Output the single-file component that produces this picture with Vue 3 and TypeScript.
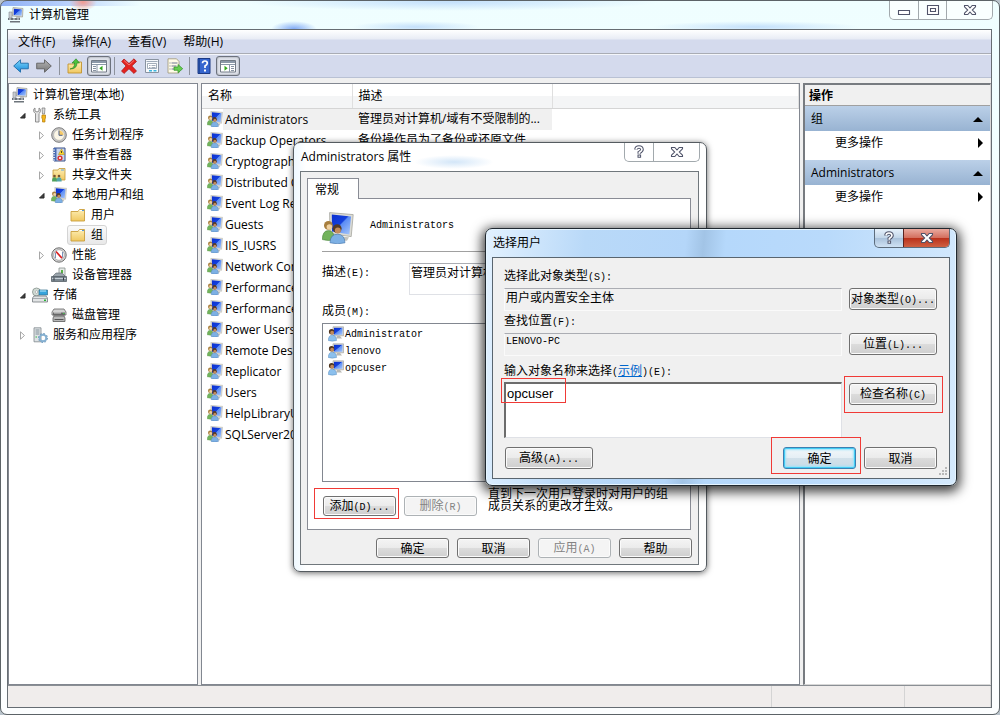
<script setup lang="ts">
import { h, ref } from 'vue'

interface TreeItem {
  label: string
  icon: string
  level: number
  state: 'open' | 'closed' | 'leaf' | 'root'
  selected?: boolean
}

const menus = ['文件(F)', '操作(A)', '查看(V)', '帮助(H)']

const tree: TreeItem[] = [
  { label: '计算机管理(本地)', icon: 'computer', level: 0, state: 'root' },
  { label: '系统工具', icon: 'tools', level: 1, state: 'open' },
  { label: '任务计划程序', icon: 'clock', level: 2, state: 'closed' },
  { label: '事件查看器', icon: 'events', level: 2, state: 'closed' },
  { label: '共享文件夹', icon: 'share', level: 2, state: 'closed' },
  { label: '本地用户和组', icon: 'group', level: 2, state: 'open' },
  { label: '用户', icon: 'folder', level: 3, state: 'leaf' },
  { label: '组', icon: 'folder', level: 3, state: 'leaf', selected: true },
  { label: '性能', icon: 'perf', level: 2, state: 'closed' },
  { label: '设备管理器', icon: 'device', level: 2, state: 'leaf' },
  { label: '存储', icon: 'storage', level: 1, state: 'open' },
  { label: '磁盘管理', icon: 'disk', level: 2, state: 'leaf' },
  { label: '服务和应用程序', icon: 'services', level: 1, state: 'closed' },
]

const groups = [
  { name: 'Administrators', desc: '管理员对计算机/域有不受限制的...' },
  { name: 'Backup Operators', desc: '备份操作员为了备份或还原文件...' },
  { name: 'Cryptographic Operators', desc: '' },
  { name: 'Distributed COM Users', desc: '' },
  { name: 'Event Log Readers', desc: '' },
  { name: 'Guests', desc: '' },
  { name: 'IIS_IUSRS', desc: '' },
  { name: 'Network Configuration', desc: '' },
  { name: 'Performance Log Users', desc: '' },
  { name: 'Performance Monitor', desc: '' },
  { name: 'Power Users', desc: '' },
  { name: 'Remote Desktop Users', desc: '' },
  { name: 'Replicator', desc: '' },
  { name: 'Users', desc: '' },
  { name: 'HelpLibraryUpdaters', desc: '' },
  { name: 'SQLServer2005', desc: '' },
]

const actionSections = ['组', 'Administrators']
const members = ['Administrator', 'lenovo', 'opcuser']

const objectType = ref('用户或内置安全主体')
const place = ref('LENOVO-PC')
const objectNames = ref('opcuser')

// Half-width runs are set in a fixed-width face beside the full-width text.
const Song = (props: { text: string }) =>
  h(
    'span',
    { class: 'song' },
    (props.text.match(/[\x20-\x7e]+|[^\x20-\x7e]+/g) ?? []).map((run) =>
      h('span', { class: /^[\x20-\x7e]/.test(run) ? 'half' : 'full' }, run),
    ),
  )
Song.props = ['text']
</script>

<template>
  <svg class="defs" aria-hidden="true">
    <defs>
      <linearGradient id="gScreen" x1="0" y1="0" x2="1" y2="1">
        <stop offset="0" stop-color="#0a2fd0" /><stop offset=".45" stop-color="#1440dc" />
        <stop offset=".5" stop-color="#5b8cf4" /><stop offset="1" stop-color="#a8c8fb" />
      </linearGradient>
      <linearGradient id="gFolder" x1="0" y1="0" x2="0" y2="1">
        <stop offset="0" stop-color="#fdeeb5" /><stop offset="1" stop-color="#f0c860" />
      </linearGradient>
      <linearGradient id="gBlue" x1="0" y1="0" x2="0" y2="1">
        <stop offset="0" stop-color="#7fd6fa" /><stop offset="1" stop-color="#1389dc" />
      </linearGradient>
      <linearGradient id="gGrey" x1="0" y1="0" x2="0" y2="1">
        <stop offset="0" stop-color="#b4b4b4" /><stop offset="1" stop-color="#777" />
      </linearGradient>
    </defs>
    <symbol id="computer" viewBox="0 0 16 16">
      <path d="M5 .5 15 1.5 14.5 10 4.5 9z" fill="#dcdcd4" stroke="#9b9b94" stroke-width=".7" />
      <path d="M6 1.7 14 2.5 13.6 8.8 5.7 8z" fill="url(#gScreen)" />
      <path d="M1 5h3v6H1z" fill="#c9ccd0" stroke="#858a90" stroke-width=".6" />
      <path d="M0 11h12v2H0zM2 14h10v1.6H2z" fill="#6d747b" />
      <path d="M1 12h2M5 12h2M9 12h2" stroke="#d8dde2" />
      <path d="M8 9.5h4v1.2H8z" fill="#aaa" />
    </symbol>
    <symbol id="tools" viewBox="0 0 16 16">
      <path d="M3 1 3 4 5 5 7 4 7 1C9 2 9 5 7 6.5V15H3.500V6.500C1 5 1 2 3 1z" fill="#e4e4e4" stroke="#777" stroke-width=".8" />
      <path d="M10 1h3l-.5 6h-2z" fill="#ddd" stroke="#777" stroke-width=".7" />
      <path d="M10 8h3.500v3L13 12v3h-2.500v-3l-.7-1z" fill="#f4b61c" stroke="#b47b08" stroke-width=".7" />
    </symbol>
    <symbol id="clock" viewBox="0 0 16 16">
      <circle cx="8" cy="8" r="7.300" fill="#c9c9c9" stroke="#7c7c7c" />
      <circle cx="8" cy="8" r="5.400" fill="#fbf6e6" stroke="#9e9e9e" stroke-width=".5" />
      <path d="M8 8h4.500A4.500 4.500 0 0 0 8 3.500z" fill="#f5c968" />
      <path d="M8 3.500V8.300H11.500" fill="none" stroke="#4b5f88" />
    </symbol>
    <symbol id="events" viewBox="0 0 16 16">
      <path d="M3 1h11v13H3z" fill="#c7d5ee" stroke="#3b5187" />
      <path d="M2.500 1h3v13h-3z" fill="#496bb3" />
      <path d="M1 3h3M1 5.500h3M1 8h3M1 10.500h3M1 13h3" stroke="#e4e8ef" stroke-width="1" />
      <path d="M10.500 2 13.500 7.500h-6z" fill="#ffd828" stroke="#aa860b" stroke-width=".5" />
      <path d="M10.500 4v2" stroke="#222" stroke-width=".8" />
      <circle cx="9" cy="11" r="2.600" fill="#d93434" />
      <path d="m8 10 2 2m0-2-2 2" stroke="#fff" stroke-width=".8" />
    </symbol>
    <symbol id="share" viewBox="0 0 16 16">
      <path d="M2 3h5l1-1.500h6V13H2z" fill="url(#gFolder)" stroke="#c39a35" stroke-width=".8" />
      <path d="M10 3h3" stroke="#5ca1dc" />
      <circle cx="3.500" cy="9" r="1.300" fill="#7a5330" /><circle cx="8" cy="9" r="1.300" fill="#7a5330" />
      <path d="M1 14.500q0-4.300 2.600-4.300t2.600 4.300z" fill="#4ea05a" /><path d="M5.500 14.500q0-4.300 2.600-4.300t2.600 4.300z" fill="#55a6a8" />
    </symbol>
    <symbol id="group" viewBox="0 0 16 16">
      <path d="M3.800.3 15.600 1.300 14.600 12.300 4 10.800z" fill="#dcdcd6" stroke="#a6a69e" stroke-width=".4" />
      <path d="M9 12.300 13.500 12.600 12.500 14.400 9 14.200z" fill="#c4c4be" />
      <path d="M4.900 1.300 14.500 2.200 13.700 11.200 5 9.800z" fill="url(#gScreen)" />
      <circle cx="3.200" cy="6.700" r="2.200" fill="#a87f3e" /><circle cx="3.700" cy="7.500" r="1.400" fill="#f0d2a2" />
      <path d="M.2 13.800q0-4.500 3-4.500 2.800 0 3.200 4.500-3 .9-6.200 0z" fill="#72b35c" stroke="#48833a" stroke-width=".3" />
      <circle cx="7.600" cy="8.300" r="2.200" fill="#553b26" /><circle cx="7.900" cy="9.300" r="1.500" fill="#c48c5c" />
      <path d="M4 15.400q.1-4.300 3.700-4.300t3.800 4.300q-3.800 1-7.500 0z" fill="#7db0e4" stroke="#3f70a8" stroke-width=".3" />
    </symbol>
    <symbol id="user" viewBox="0 0 16 16">
      <path d="M5 .8h10.500v9H5z" fill="#dcdcd4" stroke="#999" stroke-width=".6" />
      <path d="M6 1.800h8.500v7H6z" fill="url(#gScreen)" /><path d="M9 10h3l2 2.500H8z" fill="#b9b9b4" />
      <circle cx="3.600" cy="5.700" r="2.700" fill="#51361f" /><circle cx="4.100" cy="6.700" r="1.900" fill="#c28b5c" />
      <path d="M.3 14.500q0-5.300 4-5.300t4.300 5.300q-4.500 1.300-8.300 0z" fill="#8cc0ed" stroke="#427ab0" stroke-width=".4" />
    </symbol>
    <symbol id="folder" viewBox="0 0 16 16">
      <path d="M1 4.500h7l1.500-2h5v11.500h-13.500z" fill="url(#gFolder)" stroke="#c99e3c" stroke-width=".9" />
      <path d="M9.500 3.500h4" stroke="#fff" /><path d="M12 3.500h2" stroke="#4f9ad8" />
    </symbol>
    <symbol id="perf" viewBox="0 0 16 16">
      <circle cx="8" cy="8" r="7.200" fill="#d6d6d6" stroke="#6f6f6f" />
      <circle cx="8" cy="8" r="5.300" fill="#fff" stroke="#888" stroke-width=".6" />
      <path d="M4.500 11V5.500M11.500 5v5.500" stroke="#5577a8" stroke-width=".8" />
      <path d="m5 4.500 6 6.800" stroke="#d92020" stroke-width="1.700" />
    </symbol>
    <symbol id="device" viewBox="0 0 16 16">
      <path d="M8 1h6v8H8z" fill="#e7ebe8" stroke="#8b9290" stroke-width=".8" /><path d="M10 3h2v3h-2z" fill="#57b344" />
      <path d="M3 8 5 6h6l3 3v2H2V9z" fill="#9aa4ab" stroke="#59636a" stroke-width=".6" />
      <path d="M.5 9.500h15v5H.5z" fill="#7b8790" stroke="#4b545b" stroke-width=".7" />
      <path d="M1 11.500h14" stroke="#c5ced5" /><path d="M3 10.500v3M12.500 10.500v3" stroke="#343b41" />
    </symbol>
    <symbol id="storage" viewBox="0 0 16 16">
      <circle cx="4.500" cy="5" r="4" fill="#d2dcd6" stroke="#85908b" stroke-width=".8" /><circle cx="4.500" cy="5" r="1.300" fill="#fff" stroke="#888" stroke-width=".5" />
      <path d="M7 3h8.500v5H7z" fill="#36a4dc" stroke="#33718e" stroke-width=".7" /><path d="M8 4h6" stroke="#bdecff" />
      <path d="M2 9h12l1.500 2v4H.5v-4z" fill="#e2e4e5" stroke="#737a7e" stroke-width=".8" />
      <path d="M.8 11.500h14.500" stroke="#a7adb1" /><path d="M12 12.500h2v1.500h-2z" fill="#28b636" />
    </symbol>
    <symbol id="disk" viewBox="0 0 16 16">
      <path d="M3 2h10l2 3v3H1V5z" fill="#d2d2d2" stroke="#666" stroke-width=".8" /><path d="M2 5.500h12v3H2z" fill="#676767" />
      <path d="M3 6h7" stroke="#eee" stroke-width=".8" /><path d="M12 6.500h1.500" stroke="#42c34b" />
      <path d="M3 9h10l1 2v3.500H2V11z" fill="#b8b8b8" stroke="#5a5a5a" stroke-width=".8" /><path d="M3.500 12.500h9" stroke="#555" />
    </symbol>
    <symbol id="services" viewBox="0 0 16 16">
      <path d="M2 .8h7v14H2z" fill="#dfe3e5" stroke="#7d878c" stroke-width=".8" />
      <path d="M3.500 3h4M3.500 5h4M3.500 7h4" stroke="#7f8e97" /><path d="M3.500 10h1.500" stroke="#35b845" />
      <circle cx="11" cy="11" r="3.300" fill="none" stroke="#86b1d2" stroke-width="2" />
      <circle cx="11" cy="11" r="4.500" fill="none" stroke="#6793b7" stroke-width="1" stroke-dasharray="1.700 1.800" />
    </symbol>
    <symbol id="back" viewBox="0 0 16 16"><path d="M.7 8 7.500 1.800V5.200h7.800v5.600H7.500v3.400z" fill="url(#gBlue)" stroke="#1d6ba8" stroke-width=".9" /></symbol>
    <symbol id="forward" viewBox="0 0 16 16"><path d="M15.300 8 8.500 1.800V5.200H.7v5.600h7.800v3.400z" fill="url(#gGrey)" stroke="#606060" stroke-width=".9" /></symbol>
    <symbol id="up" viewBox="0 0 16 16">
      <path d="M1 6h6l1.500-2H14.500v11H1z" fill="url(#gFolder)" stroke="#c2932f" stroke-width=".9" />
      <path d="M3 11Q8 10 7.500 5H5L9 .8 12.500 5H10Q10 11 3 11z" fill="#4cc23e" stroke="#25801e" stroke-width=".6" />
    </symbol>
    <symbol id="paneLeft" viewBox="0 0 16 16">
      <path d="M.5 2.500h15v11.500H.5z" fill="#fff" stroke="#737b86" /><path d="M1 4h14" stroke="#8b98a8" stroke-width="2" /><path d="M1 6.500h14M6 7v7" stroke="#8b98a8" />
      <path d="M2 8.500h3M2 10.500h3M2 12.500h3" stroke="#7a8797" stroke-width=".9" /><path d="M11.500 7.800v5L8.300 10.300z" fill="#32a61e" />
    </symbol>
    <symbol id="paneRight" viewBox="0 0 16 16">
      <path d="M.5 2.500h15v11.500H.5z" fill="#fff" stroke="#737b86" /><path d="M1 4h14" stroke="#8b98a8" stroke-width="2" /><path d="M1 6.500h14M9.500 7v7" stroke="#8b98a8" />
      <path d="M11 8.500h3M11 10.500h3M11 12.500h3" stroke="#7a8797" stroke-width=".9" /><path d="M4.500 7.800v5l3.200-2.500z" fill="#32a61e" />
    </symbol>
    <symbol id="delete" viewBox="0 0 16 16"><path d="M3 1 8 5.500 13 .8 15.500 3.500 10.800 8 15.500 13 13 15.500 8 10.800 3 15.500.5 13 5 8 .7 3.500z" fill="#e42320" stroke="#a61515" stroke-width=".7" /><path d="m3 2.500 5 4.500 5-4.500" fill="none" stroke="#f98a80" stroke-width=".8" /></symbol>
    <symbol id="props" viewBox="0 0 16 16">
      <path d="M1.500 1.500h13v13h-13z" fill="#f8fafc" stroke="#8993a0" /><path d="M2.500 3.500h11" stroke="#9fabb9" /><path d="M3.500 5.500h9v5h-9z" fill="#fff" stroke="#8d99a8" stroke-width=".8" />
      <path d="M5 7.500h1.500M7.500 7.500h4M5 9.500h1.500M7.500 9.500h4" stroke="#8d99a8" stroke-width=".8" /><path d="M5 12h3v1.500H5zM9.500 12h3v1.500h-3z" fill="#3bb6df" />
    </symbol>
    <symbol id="export" viewBox="0 0 16 16">
      <path d="M1 .8h8.500L12 3.500v11.500H1z" fill="#fffce8" stroke="#9c9576" stroke-width=".8" /><path d="M2.500 5h1M4.500 5h6M2.500 8h1M4.500 8h5M2.500 11h1M4.500 11h4" stroke="#6d7791" />
      <path d="M7 9h4V6.500l4.700 4.200L11 14.800v-2.500H7z" fill="#66cf50" stroke="#2e8f25" stroke-width=".7" />
    </symbol>
    <symbol id="help" viewBox="0 0 16 16">
      <path d="M2 .5h12v15H2z" fill="#3565cf" stroke="#1c3a84" /><path d="M2 1h2v14H2z" fill="#234a9e" />
      <path d="M6.500 5.300Q6.500 3 8.900 3t2.400 2.200Q11.300 6.500 9 8V10" fill="none" stroke="#fff" stroke-width="1.700" /><path d="M8 11.500h2v2H8z" fill="#fff" />
    </symbol>
    <symbol id="capHelp" viewBox="0 0 16 16">
      <path d="M5 5.500Q5 3 8 3t3 2.600Q11 7 8.300 8.500V9.800" fill="none" stroke="#50546a" stroke-width="3.600" /><path d="M6.500 10.500h3.600v3.300H6.500z" fill="#50546a" />
      <path d="M5 5.300Q5.300 3 8 3t3 2.600Q11 7 8.300 8.500V9.800" fill="none" stroke="#fff" stroke-width="1.600" /><path d="M7.500 11.500h1.600v1.300H7.500z" fill="#fff" />
    </symbol>
    <symbol id="capClose" viewBox="0 0 16 16"><path d="M2.500 3.500h3.300L8 6l2.200-2.500h3.300v1.300L10.300 8l3.200 3.200v1.300h-3.300L8 10l-2.200 2.500H2.500v-1.300L5.700 8 2.500 4.800z" fill="#fff" stroke="#50546a" stroke-width="1.100" /></symbol>
    <symbol id="capMin" viewBox="0 0 16 16"><path d="M2.500 8.500h11v4h-11z" fill="#fff" stroke="#50546a" stroke-width="1.100" /></symbol>
    <symbol id="capMax" viewBox="0 0 16 16"><path d="M2.500 3.500h11v9h-11z" fill="#fff" stroke="#50546a" stroke-width="1.100" /><path d="M5.500 6.500h5v3h-5z" fill="#fff" stroke="#50546a" stroke-width="1.100" /></symbol>
  </svg>

  <div class="window">
    <header class="titlebar">
      <svg class="ico"><use href="#computer" /></svg>
      <h1>计算机管理</h1>
      <div class="caption main-caption">
        <button aria-label="最小化"><svg class="ico"><use href="#capMin" /></svg></button>
        <button aria-label="最大化"><svg class="ico"><use href="#capMax" /></svg></button>
        <button class="wide" aria-label="关闭"><svg class="ico"><use href="#capClose" /></svg></button>
      </div>
    </header>

    <div class="client">
      <nav class="menubar"><button v-for="m in menus" :key="m">{{ m }}</button></nav>
      <div class="toolbar">
        <button aria-label="后退"><svg class="ico"><use href="#back" /></svg></button>
        <button aria-label="前进"><svg class="ico"><use href="#forward" /></svg></button>
        <i class="sep"></i>
        <button aria-label="上一级"><svg class="ico"><use href="#up" /></svg></button>
        <button class="pressed" aria-label="控制台树"><svg class="ico"><use href="#paneLeft" /></svg></button>
        <i class="sep tight"></i>
        <button aria-label="删除"><svg class="ico"><use href="#delete" /></svg></button>
        <button aria-label="属性"><svg class="ico"><use href="#props" /></svg></button>
        <button aria-label="导出列表"><svg class="ico"><use href="#export" /></svg></button>
        <i class="sep tight"></i>
        <button aria-label="帮助"><svg class="ico"><use href="#help" /></svg></button>
        <button class="pressed" aria-label="操作窗格"><svg class="ico"><use href="#paneRight" /></svg></button>
      </div>

      <main class="panes">
        <ul class="tree">
          <li v-for="t in tree" :key="t.label" :class="['level' + t.level, { selected: t.selected }]">
            <svg v-if="t.state !== 'root'" class="twist" viewBox="0 0 9 9">
              <path v-if="t.state === 'open'" d="M7 2.500v4.500H2.500z" fill="#404040" stroke="#262626" />
              <path v-if="t.state === 'closed'" d="M2.500.8v7.400L6.500 4.500z" fill="#fff" stroke="#a6a6a6" />
            </svg>
            <span class="node"><svg class="ico"><use :href="'#' + t.icon" /></svg>{{ t.label }}</span>
          </li>
        </ul>

        <section class="list">
          <table>
            <colgroup><col class="c-name" /><col class="c-desc" /><col /></colgroup>
            <thead><tr><th>名称</th><th>描述</th><th></th></tr></thead>
            <tbody>
              <tr v-for="(g, i) in groups" :key="g.name" :class="{ current: i === 0 }">
                <td class="name"><span class="cell"><svg class="ico"><use href="#group" /></svg><span class="label">{{ g.name }}</span></span></td>
                <td class="desc">{{ g.desc }}</td>
                <td></td>
              </tr>
            </tbody>
          </table>
        </section>

        <aside class="actions">
          <h2>操作</h2>
          <section v-for="s in actionSections" :key="s">
            <h3>{{ s }}<svg class="arrow" viewBox="0 0 10 10"><path d="M0 8h10L5 3z" /></svg></h3>
            <button>更多操作<svg class="arrow" viewBox="0 0 10 10"><path d="M4 0v10l5-5z" /></svg></button>
          </section>
        </aside>
      </main>
      <footer class="status"><span></span><span></span><span></span></footer>
    </div>
  </div>

  <section class="dialog properties" role="dialog" aria-label="Administrators 属性">
    <header class="dlg-title">
      <h2>Administrators 属性</h2>
      <div class="caption">
        <button aria-label="帮助"><svg class="ico"><use href="#capHelp" /></svg></button>
        <button class="wide" aria-label="关闭"><svg class="ico"><use href="#capClose" /></svg></button>
      </div>
    </header>
    <div class="dlg-client props-client">
      <button class="tab"><Song text="常规" /></button>
      <div class="panel">
        <div class="who"><svg class="big"><use href="#group" /></svg><Song text="Administrators" /></div>
        <div class="desc-row">
          <label for="desc"><Song text="描述(E):" /></label>
          <textarea id="desc" class="desc-box">管理员对计算机/域有不受限制的完全访问权</textarea>
        </div>
        <div class="member-label"><Song text="成员(M):" /></div>
        <ul class="members">
          <li v-for="m in members" :key="m"><svg class="ico"><use href="#user" /></svg><Song :text="m" /></li>
        </ul>
        <div class="member-actions">
          <span class="mark mark-add"><button class="btn"><Song text="添加(D)..." /></button></span>
          <button class="btn" disabled><Song text="删除(R)" /></button>
          <p>直到下一次用户登录时对用户的组成员关系的更改才生效。</p>
        </div>
      </div>
      <div class="dlg-buttons">
        <button class="btn"><Song text="确定" /></button>
        <button class="btn"><Song text="取消" /></button>
        <button class="btn" disabled><Song text="应用(A)" /></button>
        <button class="btn"><Song text="帮助" /></button>
      </div>
    </div>
  </section>

  <section class="dialog picker" role="dialog" aria-label="选择用户">
    <header class="dlg-title">
      <h2>选择用户</h2>
      <div class="caption">
        <button aria-label="帮助"><svg class="ico"><use href="#capHelp" /></svg></button>
        <button class="wide red" aria-label="关闭"><svg class="ico"><use href="#capClose" /></svg></button>
      </div>
    </header>
    <form class="dlg-client picker-client" @submit.prevent>
      <label for="otype"><Song text="选择此对象类型(S):" /></label>
      <div class="field"><input id="otype" v-model="objectType" readonly /><button type="button" class="btn"><Song text="对象类型(O)..." /></button></div>
      <label for="place"><Song text="查找位置(F):" /></label>
      <div class="field"><input id="place" v-model="place" class="latin" readonly /><button type="button" class="btn"><Song text="位置(L)..." /></button></div>
      <div class="names-label"><label for="names"><Song text="输入对象名称来选择(" /></label><a href="#"><Song text="示例" /></a><Song text=")(E):" /></div>
      <div class="field names">
        <span class="mark mark-name"><textarea id="names" v-model="objectNames" spellcheck="false"></textarea></span>
        <span class="mark mark-check"><button type="button" class="btn"><Song text="检查名称(C)" /></button></span>
      </div>
      <div class="picker-buttons">
        <button type="button" class="btn advanced"><Song text="高级(A)..." /></button>
        <span class="mark mark-ok"><button class="btn default"><Song text="确定" /></button></span>
        <button type="button" class="btn"><Song text="取消" /></button>
      </div>
      <svg class="grip" viewBox="0 0 9 9" aria-hidden="true"><path d="M7 1h2M4 4h2M7 4h2M1 7h2M4 7h2M7 7h2" stroke="#b8b8b8" stroke-width="2" /></svg>
    </form>
  </section>
</template>

<style>
html,
body,
#app {
  height: 100%;
}
body {
  margin: 0;
  overflow: hidden;
  background: #b9c3cb;
}
.song {
  font: 12px/16px "Noto Sans CJK SC", sans-serif;
  white-space: pre;
}
.song .half {
  font: 10px/16px "Liberation Mono", monospace;
}
</style>

<style scoped>
* {
  box-sizing: border-box;
}
.defs {
  position: absolute;
  width: 0;
  height: 0;
}
h1, h2, h3, p, ul {
  margin: 0;
  padding: 0;
  font-weight: normal;
  list-style: none;
}
h1, h2, h3 {
  font-size: 12px;
}
button {
  padding: 0;
  border: 0;
  background: none;
  font: inherit;
  color: inherit;
}
.ico {
  width: 16px;
  height: 16px;
  flex: none;
}
.window,
.dialog {
  font: 12px/16px "Open Sans", "Noto Sans CJK SC", sans-serif;
  color: #000;
}
.window {
  display: flex;
  flex-direction: column;
  height: 100vh;
  padding: 0 7px 6px 6px;
  border: 1px solid #5c6367;
  border-radius: 7px;
  background:
    radial-gradient(ellipse at center, #7fa9f5 0, transparent 70%) 270px 20px / 46px 16px no-repeat,
    radial-gradient(ellipse at center, #f09a90 0, transparent 70%) 68px -8px / 28px 18px no-repeat,
    radial-gradient(ellipse at center, #c4e0fb 0, transparent 70%) 240px -8px / 420px 18px no-repeat,
    radial-gradient(ellipse at center, #c4e0fb 0, transparent 70%) 350px 20px / 130px 12px no-repeat,
    radial-gradient(ellipse at center, #c4e0fb 0, transparent 70%) 650px 20px / 210px 12px no-repeat,
    linear-gradient(90deg, #8eb0f5, #b4cefb 60px, transparent 140px) 0 0 / 100% 5px no-repeat,
    linear-gradient(#effeff, #f1ffff 120px, #fcfeff 300px);
}
.titlebar {
  display: flex;
  flex: none;
  align-items: center;
  gap: 5px;
  height: 28px;
  padding-left: 1px;
}
.caption {
  display: flex;
  align-self: flex-start;
  height: 19px;
  margin-left: auto;
  border: 1px solid #a2a9ad;
  border-top: 0;
  border-radius: 0 0 5px 5px;
  background: rgba(255, 255, 255, 0.6);
  overflow: hidden;
}
.main-caption,
.properties .caption {
  margin-right: -1px;
}
.caption button {
  display: flex;
  align-items: center;
  justify-content: center;
  width: 28px;
}
.caption button + button {
  border-left: 1px solid #a2a9ad;
}
.caption .wide {
  width: 46px;
}
.client {
  display: flex;
  flex: 1;
  flex-direction: column;
  min-height: 0;
  border: 1px solid #666d73;
  background: #f0f0f0;
}
.menubar {
  display: flex;
  flex: none;
  gap: 17px;
  height: 24px;
  padding-left: 10px;
  border-bottom: 1px solid #a9acb4;
  background: linear-gradient(#fff, #e8ecf5 9px, #d4daed 10px, #d4daed);
}
.toolbar {
  display: flex;
  flex: none;
  align-items: center;
  gap: 1px;
  height: 24px;
  padding-left: 2px;
  border-top: 1px solid #f4f6fb;
  border-bottom: 1px solid #b9c1d4;
  background: #d4daed;
}
.toolbar button {
  display: flex;
  align-items: center;
  justify-content: center;
  width: 22px;
  height: 20px;
}
.toolbar .pressed {
  width: 24px;
  border: 1px solid #6c727d;
  border-radius: 3px;
  background: #dfe2ea;
  box-shadow: inset 0 0 2px #7d828c;
}
.sep {
  width: 1px;
  height: 18px;
  margin: 0 3px;
  background: #8d929c;
}
.tight {
  margin: 0 2px;
}
.panes {
  display: grid;
  flex: 1;
  grid-template-columns: 190px minmax(0, 1fr) 188px;
  gap: 3px;
  min-height: 0;
  padding-top: 5px;
}
.tree,
.list {
  border: 1px solid #828790;
  background: #fff;
  overflow: hidden;
}
.tree {
  padding-top: 1px;
}
.tree li {
  display: flex;
  align-items: center;
  height: 20px;
}
.level0 {
  padding-left: 0;
}
.level1 {
  padding-left: 9px;
}
.level2 {
  padding-left: 28px;
}
.level3 {
  padding-left: 47px;
}
.twist {
  width: 9px;
  height: 9px;
  margin-right: 2px;
  flex: none;
}
.node {
  display: flex;
  align-items: center;
  gap: 5px;
  height: 20px;
  padding: 0 3px 0 2px;
  border: 1px solid transparent;
  border-radius: 3px;
  white-space: nowrap;
}
.selected .node {
  border-color: #d4d4d4;
  background: linear-gradient(#fafafa, #e8e8e8);
}
.list table {
  width: 100%;
  border-collapse: collapse;
  table-layout: fixed;
}
.c-name {
  width: 150px;
}
.c-desc {
  width: 200px;
}
th {
  height: 24px;
  padding: 0 0 0 6px;
  border-right: 1px solid #dfdfdf;
  border-bottom: 1px solid #d5d5d5;
  background: linear-gradient(#fff 50%, #f4f5f6 51%);
  font-weight: normal;
  text-align: left;
}
td {
  height: 21px;
  padding: 0;
  white-space: nowrap;
  overflow: hidden;
}
.name {
  padding-left: 5px;
}
.cell {
  display: flex;
  align-items: center;
}
.label {
  flex: 1;
  padding-left: 2px;
  line-height: 21px;
}
.desc {
  padding-left: 6px;
}
.current .label,
.current .desc {
  background: #f0f0f0;
}
.actions {
  border: 1px solid #d8d8d8;
  border-top: 2px solid #777b80;
  border-left: 2px solid #777b80;
  background: #fff;
}
.actions h2 {
  height: 21px;
  padding-left: 4px;
  border-bottom: 1px solid #a0a0a0;
  background: #f0f0f0;
  font-weight: bold;
  line-height: 21px;
}
.actions h3,
.actions section button {
  display: flex;
  align-items: center;
  justify-content: space-between;
  width: 100%;
  height: 25px;
  padding: 0 7px 0 6px;
}
.actions h3 {
  background: linear-gradient(#bbd0e8, #98b3d2);
}
.actions section button {
  height: 24px;
  margin-bottom: 5px;
  padding: 0 6px 0 30px;
}
.arrow {
  width: 10px;
  height: 10px;
}
.status {
  display: flex;
  flex: none;
  height: 22px;
  border-top: 1px solid #8a8f94;
  background: #f0edec;
}
.status span {
  flex: 1;
  border-right: 1px solid #d4d4d4;
}
.status span:nth-child(2) {
  flex: 0 0 133px;
}
.status span:last-child {
  flex: 0 0 86px;
}

.dialog {
  position: absolute;
  display: flex;
  flex-direction: column;
  border: 1px solid #555b60;
  border-radius: 7px;
}
.dlg-title {
  display: flex;
  flex: none;
  height: 28px;
}
.dlg-title h2 {
  line-height: 28px;
}
.dlg-client {
  flex: 1;
  border: 1px solid #70777c;
  background: #f0f0f0;
}
.btn {
  flex: none;
  width: 73px;
  height: 20px;
  border: 1px solid #707070;
  border-radius: 3px;
  background: linear-gradient(#f4f4f4, #ebebeb 49%, #dcdcdc 50%, #cfcfcf);
  box-shadow: inset 0 0 0 1px #fbfbfb;
  line-height: 16px;
  text-align: center;
  white-space: nowrap;
}
.btn:disabled {
  border-color: #adb2b5;
  background: #f4f4f4;
  color: #838383;
}
.mark {
  position: relative;
  display: flex;
}
.mark::after {
  content: "";
  position: absolute;
  border: 1px solid #f03a36;
  pointer-events: none;
}
.mark-add::after {
  inset: -8px -3px -3px -9px;
}
.mark-name::after {
  left: -3px;
  top: -4px;
  width: 63px;
  height: 23px;
}
.mark-check::after {
  inset: -7px -6px -8px -5px;
}
.mark-ok::after {
  inset: -10px -5px -5px -12px;
}

.properties {
  left: 293px;
  top: 142px;
  width: 414px;
  height: 430px;
  padding: 0 7px 7px 6px;
  background:
    radial-gradient(ellipse at center, #d3e6f8 0, transparent 70%) 120px 12px / 80px 14px no-repeat,
    linear-gradient(90deg, #eef8ff, #fff 12px);
  box-shadow: 0 1px 6px rgba(0, 0, 0, 0.6);
}
.properties .dlg-title h2 {
  padding-left: 1px;
}
.props-client {
  padding: 6px 7px 6px 6px;
}
.tab {
  display: block;
  position: relative;
  width: 52px;
  height: 21px;
  margin-bottom: -1px;
  padding-left: 7px;
  border: 1px solid #898c95;
  border-bottom: 0;
  background: #fff;
  line-height: 19px;
  text-align: left;
}
.panel {
  height: 332px;
  padding: 12px 14px;
  border: 1px solid #898c95;
  background: #fff;
}
.who {
  display: flex;
  align-items: center;
  gap: 16px;
  height: 41px;
  padding-bottom: 13px;
  border-bottom: 1px solid #a0a0a0;
}
.big {
  width: 32px;
  height: 32px;
  margin-bottom: -6px;
}
.desc-row {
  display: flex;
  margin-top: 11px;
}
.desc-row label {
  width: 87px;
}
.desc-box {
  flex: 1;
  height: 32px;
  padding: 0 1px;
  border: 1px solid #dfe1e6;
  border-top-color: #abadb3;
  background: #fff;
  font: 12px/16px "Noto Sans CJK SC", sans-serif;
  white-space: nowrap;
  overflow: hidden;
  resize: none;
}
.member-label {
  height: 28px;
  padding-top: 7px;
}
.members {
  height: 159px;
  padding: 1px 5px;
  border: 1px solid #828790;
}
.members li {
  display: flex;
  align-items: center;
  gap: 1px;
  height: 17px;
}
.member-actions {
  display: flex;
  align-items: flex-start;
  gap: 8px;
  padding: 14px 0 0 1px;
}
.member-actions p {
  flex: 0 1 182px;
  margin: -9px 0 0 3px;
  font: 12px/12px "Noto Sans CJK SC", sans-serif;
}
.dlg-buttons {
  display: flex;
  justify-content: flex-end;
  gap: 8px;
  padding-top: 8px;
  margin-right: -1px;
}

.picker {
  left: 485px;
  top: 228px;
  width: 472px;
  height: 258px;
  padding: 0 6px 6px;
  border-color: #20282f;
  background: linear-gradient(95deg, #e2f1ff 0, #b9d9f8 100px, #b4d6f9 200px, #a2c4e6 218px, #b5d8fb 240px, #b9dafb 340px, #d5eafd 100%);
  box-shadow: inset 0 0 0 1px #e6f5ff, 0 3px 12px 3px rgba(0, 0, 0, 0.75);
}
.picker .dlg-title h2 {
  padding-left: 1px;
}
.picker .caption {
  border-color: #5c6c7c;
  background: linear-gradient(#e6f1fb, #c1d5e8 50%, #a9c1da 51%, #cfe2f4);
}
.picker .caption .red {
  border-color: #5b2320;
  background: linear-gradient(#e9aa9f, #d4705f 48%, #b9301a 50%, #cf6042);
}
.picker-client {
  position: relative;
  padding: 8px 12px 0 11px;
  border-color: #59656f;
}
.picker-client label {
  display: block;
}
.picker-client > label,
.names-label {
  height: 20px;
  margin-bottom: 1px;
  padding-top: 1px;
}
.field {
  display: flex;
  align-items: center;
  gap: 7px;
  height: 24px;
}
.field input {
  flex: 1;
  height: 23px;
  padding: 0 1px 5px;
  border: 1px solid #fafafa;
  border-top-color: #abadb3;
  background: #f0f0f0;
  font: 12px/16px "Noto Sans CJK SC", sans-serif;
  outline: 0;
}
.field input.latin {
  font: 10px/16px "Liberation Mono", monospace;
}
.field .btn {
  width: 88px;
  height: 22px;
}
.names-label {
  display: flex;
  margin-top: 5px;
}
.names-label a {
  color: #0066cc;
}
.names {
  align-items: flex-start;
  height: 56px;
}
.mark-name {
  flex: 1;
}
.mark-name textarea {
  width: 100%;
  height: 56px;
  padding: 2px 1px;
  border: 1px solid #dfe1e6;
  border-top: 2px solid #6c6c6c;
  border-left: 2px solid #6c6c6c;
  background: #fff;
  font: 13px/16px "Liberation Sans", sans-serif;
  resize: none;
  outline: 0;
}
.mark-check {
  margin-top: 1px;
}
.picker-buttons {
  display: flex;
  gap: 8px;
  padding: 9px 0 0 1px;
}
.picker-buttons .btn {
  height: 22px;
}
.picker-buttons .advanced {
  width: 88px;
  margin-right: auto;
}
.btn.default {
  border-color: #3c7fb1;
  background: linear-gradient(#f2f7fa, #e5eff5 49%, #d2e1ea 50%, #c9dbe6);
  box-shadow: inset 0 0 0 1px #43cdf4, inset 0 0 2px 2px #9ae3fb;
}
.grip {
  position: absolute;
  right: 2px;
  bottom: 2px;
  width: 9px;
  height: 9px;
}
</style>
